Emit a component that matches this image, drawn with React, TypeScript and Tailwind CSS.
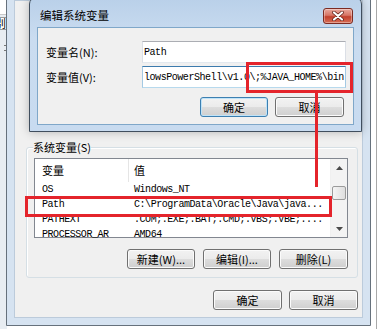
import type { ReactNode } from 'react';

const cjk = "font-['Noto_Sans_CJK_SC',sans-serif]";
const mono = "font-['Liberation_Mono',monospace] text-[10px] tracking-[-0.45px]";

function WinButton({ children, w, focused = false }: { children: ReactNode; w: string; focused?: boolean }) {
  return (
    <div
      className={`flex h-[20px] items-center justify-center rounded-[3px] border bg-[linear-gradient(to_bottom,#f2f2f2_0%,#ebebeb_50%,#dddddd_51%,#cfcfcf_100%)] text-[11px] leading-none text-black ${cjk} ${w} ${
        focused ? 'border-[#3c7fb1] shadow-[inset_0_0_0_1px_#bfe3f8]' : 'border-[#707070] shadow-[inset_0_0_0_1px_#fbfbfb]'
      }`}
    >
      {children}
    </div>
  );
}

const rows = [
  ['OS', 'Windows_NT'],
  ['Path', 'C:\\ProgramData\\Oracle\\Java\\java...'],
  ['PATHEXT', '.COM;.EXE;.BAT;.CMD;.VBS;.VBE;....'],
  ['PROCESSOR_AR', 'AMD64'],
];

function Arrow({ up }: { up?: boolean }) {
  return (
    <svg width="7" height="4" viewBox="0 0 7 4">
      <path d={up ? 'M0 4 L3.5 0 L7 4 Z' : 'M0 0 L3.5 4 L7 0 Z'} fill="#4a4a4a" />
    </svg>
  );
}

export default function App() {
  return (
    <div className="relative h-[329px] w-[378px] overflow-hidden bg-white">
      {/* window behind, left */}
      <div className="absolute left-0 top-0 flex h-full w-[7px] flex-col bg-[#e8edf2]">
        <div className="h-[15px] border-b border-[#c9c9c9] bg-white" />
        <div className={`mt-[2px] h-[13px] overflow-hidden border-y border-[#9a9a9a] bg-white text-[11px] leading-[11px] ${cjk}`}>
          <span className="ml-[-5px]">别</span>
        </div>
        <div className="mt-[15px] ml-[4px] h-[6px] w-[2px] border-y border-[#777]" />
      </div>

      {/* window behind, right */}
      <div className="absolute right-0 top-0 h-full w-[8px] bg-white">
        <div className="ml-[6px] h-full w-[1px] bg-[#a9a9a9]" />
      </div>

      {/* 环境变量 dialog */}
      <div className="absolute left-[6px] top-[-30px] h-[356px] w-[365px] rounded-t-[6px] border border-[#66717c] bg-[#d6e3f1] px-[7px] pb-[7px] pt-[29px]">
        <div className="h-full border border-[#bccbdb] bg-[#f0f0f0] pl-[11px] pr-[4px]">
          <fieldset className="mt-[139px] rounded-[3px] border border-[#d5dfe5] pb-[8px] pl-[7px] pr-[9px] shadow-[inset_1px_1px_0_#ffffff]">
            <legend className={`ml-[-1px] px-0 text-[11px] leading-[14px] text-black ${cjk}`}>系统变量(S)</legend>
            <div className="mt-[4px] flex h-[80px] border border-[#828790] bg-white">
              <div className="flex-1">
                <div className={`flex h-[23px] items-center text-[11px] text-black ${cjk}`}>
                  <div className="flex h-full w-[94px] items-center border-r border-[#e5e5e5] pl-[7px]">变量</div>
                  <div className="pl-[5px]">值</div>
                </div>
                {rows.map(([k, v]) => (
                  <div key={k} className={`flex h-[15px] items-center text-black ${mono}`}>
                    <div className="w-[94px] pl-[7px]">{k}</div>
                    <div className="pl-[5px]">{v}</div>
                  </div>
                ))}
              </div>
              <div className="flex w-[17px] flex-col border-l border-[#f0f0f0] bg-[#f3f3f3]">
                <div className="flex h-[17px] items-center justify-center">
                  <Arrow up />
                </div>
                <div className="flex-1 px-[1px] pt-[10px]">
                  <div className="h-[14px] rounded-[2px] border border-[#9b9b9b] bg-[linear-gradient(to_right,#f5f5f5,#dedede)]" />
                </div>
                <div className="flex h-[17px] items-center justify-center">
                  <Arrow />
                </div>
              </div>
            </div>
            <div className="mt-[11px] flex justify-end gap-[8px]">
              <WinButton w="w-[68px]">新建(W)...</WinButton>
              <WinButton w="w-[68px]">编辑(I)...</WinButton>
              <WinButton w="w-[69px]">删除(L)</WinButton>
            </div>
          </fieldset>
          <div className="mt-[12px] flex justify-end gap-[7px]">
            <WinButton w="w-[69px]">确定</WinButton>
            <WinButton w="w-[69px]">取消</WinButton>
          </div>
        </div>
      </div>

      {/* 编辑系统变量 dialog */}
      <div className="absolute left-[29px] top-[-3px] flex h-[135px] w-[333px] flex-col rounded-t-[7px] border border-[#404e5e] bg-[linear-gradient(to_bottom,#b9d0e9,#cadcf0_30%,#c8dbf0)] px-[7px] pb-[6px] shadow-[0_0_10px_rgba(0,0,0,0.25)]">
        <div className="flex h-[29px] shrink-0 items-center justify-between pl-[3px] pr-[1px] pt-[6px]">
          <span className={`text-[11.5px] text-black ${cjk}`}>编辑系统变量</span>
          <div className="flex h-[16px] w-[30px] items-center justify-center rounded-[3px] border border-[#7c2b22] bg-[linear-gradient(to_bottom,#e9a99e_0%,#d77565_45%,#c2402d_55%,#d76e55_100%)] shadow-[inset_0_0_0_1px_rgba(255,255,255,0.35)]">
            <svg width="12" height="10" viewBox="0 0 12 10">
              <path d="M2 1.5 L10 8.5 M10 1.5 L2 8.5" stroke="#5b1c14" strokeWidth="3.6" strokeLinecap="round" />
              <path d="M2 1.5 L10 8.5 M10 1.5 L2 8.5" stroke="#ffffff" strokeWidth="2.2" strokeLinecap="round" />
            </svg>
          </div>
        </div>
        <div className="flex-1 border border-[#7fa7c9] bg-[#f0f0f0]">
          <div className={`mt-[13px] grid grid-cols-[104px_204px] gap-y-[3px] text-[11px] text-black ${cjk}`}>
            <div className="flex h-[22px] items-center pl-[8px]">变量名(N):</div>
            <div className={`flex h-[22px] items-center border border-[#abadb3] border-b-[#e3e9ef] border-x-[#dbdfe6] bg-white pl-[1px] ${mono}`}>Path</div>
            <div className="flex h-[22px] items-center pl-[8px]">变量值(V):</div>
            <div className={`flex h-[22px] items-center overflow-hidden whitespace-nowrap border border-[#3d7bad] border-b-[#b7d9ed] border-x-[#a4c9e3] bg-white pl-[1px] ${mono}`}>
              {'lowsPowerShell\\v1.0\\;%JAVA_HOME%\\bin'}
              <span className="ml-[1px] h-[13px] w-[1px] bg-black" />
            </div>
          </div>
          <div className="mr-[9px] mt-[9px] flex justify-end gap-[7px]">
            <WinButton w="w-[68px]" focused>确定</WinButton>
            <WinButton w="w-[69px]">取消</WinButton>
          </div>
        </div>
      </div>

      {/* red annotations */}
      <div className="absolute left-[246px] top-[62px] h-[31px] w-[107px] border-[3px] border-[#e4242b]" />
      <div className="absolute left-[315px] top-[92px] h-[95px] w-[3px] bg-[#e4242b]" />
      <div className="absolute left-[25px] top-[196px] h-[21px] w-[307px] border-[3px] border-[#e4242b]" />
    </div>
  );
}
